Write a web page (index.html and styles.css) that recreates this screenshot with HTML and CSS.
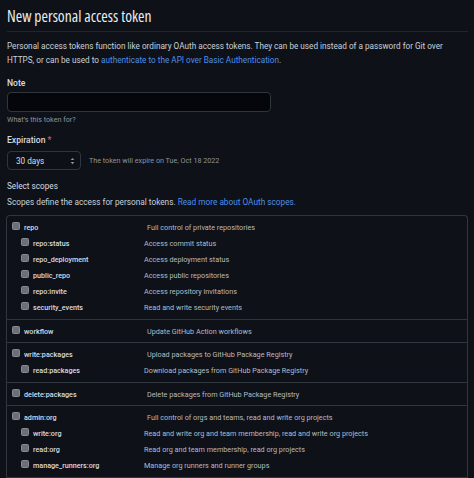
FILE: index.html
```html
<!DOCTYPE html>
<html lang="en">
<head>
<meta charset="utf-8">
<title>New personal access token</title>
<link rel="stylesheet" href="styles.css">
</head>
<body>
<main class="page">
  <h1 class="title">New personal access token</h1>
  <p class="intro">Personal access tokens function like ordinary OAuth access tokens. They can be used instead of a password for Git over HTTPS, or can be used to <a href="#" class="link">authenticate to the API over Basic Authentication</a>.</p>

  <div class="field first">
    <label class="field-label">Note</label>
    <div class="input"></div>
    <p class="hint">What’s this token for?</p>
  </div>

  <div class="field">
    <label class="field-label">Expiration <span class="req">*</span></label>
    <div class="exp-row">
      <div class="select">
        <span>30 days</span>
        <svg class="updown" viewBox="0 0 8 12" width="5" height="8"><path d="M4 1 L7 4.5 H1 Z M4 11 L7 7.5 H1 Z" fill="#8b949e"/></svg>
      </div>
      <span class="exp-note">The token will expire on Tue, Oct 18 2022</span>
    </div>
  </div>

  <h2 class="section">Select scopes</h2>
  <p class="scopes-intro">Scopes define the access for personal tokens. <a href="#" class="link">Read more about OAuth scopes.</a></p>

  <div class="scopes">
    <div class="group">
      <div class="row top"><span class="cb"></span><span class="name">repo</span><span class="desc">Full control of private repositories</span></div>
      <div class="row sub"><span class="cb"></span><span class="name">repo:status</span><span class="desc">Access commit status</span></div>
      <div class="row sub"><span class="cb"></span><span class="name">repo_deployment</span><span class="desc">Access deployment status</span></div>
      <div class="row sub"><span class="cb"></span><span class="name">public_repo</span><span class="desc">Access public repositories</span></div>
      <div class="row sub"><span class="cb"></span><span class="name">repo:invite</span><span class="desc">Access repository invitations</span></div>
      <div class="row sub"><span class="cb"></span><span class="name">security_events</span><span class="desc">Read and write security events</span></div>
    </div>
    <div class="group">
      <div class="row top"><span class="cb"></span><span class="name">workflow</span><span class="desc">Update GitHub Action workflows</span></div>
    </div>
    <div class="group">
      <div class="row top"><span class="cb"></span><span class="name">write:packages</span><span class="desc">Upload packages to GitHub Package Registry</span></div>
      <div class="row sub"><span class="cb"></span><span class="name">read:packages</span><span class="desc">Download packages from GitHub Package Registry</span></div>
    </div>
    <div class="group">
      <div class="row top"><span class="cb"></span><span class="name">delete:packages</span><span class="desc">Delete packages from GitHub Package Registry</span></div>
    </div>
    <div class="group">
      <div class="row top"><span class="cb"></span><span class="name">admin:org</span><span class="desc">Full control of orgs and teams, read and write org projects</span></div>
      <div class="row sub"><span class="cb"></span><span class="name">write:org</span><span class="desc">Read and write org and team membership, read and write org projects</span></div>
      <div class="row sub"><span class="cb"></span><span class="name">read:org</span><span class="desc">Read org and team membership, read org projects</span></div>
      <div class="row sub"><span class="cb"></span><span class="name">manage_runners:org</span><span class="desc">Manage org runners and runner groups</span></div>
    </div>
    <div class="group filler"></div>
  </div>
</main>
</body>
</html>
```

FILE: styles.css
```css
html, body {
  margin: 0;
  padding: 0;
  background: #0e1117;
  color: #c9d1d9;
  font-family: Roboto, "Noto Sans", sans-serif;
  overflow: hidden;
  height: 478px;
}

.page {
  padding: 0 6px 0 7px;
}

.title {
  margin: 0;
  padding-top: 6px;
  font-family: "Open Sans", "Noto Sans", sans-serif;
  font-stretch: 87.5%;
  font-size: 15.6px;
  line-height: 20px;
  font-weight: 400;
  color: #e6edf3;
  padding-bottom: 5px;
  border-bottom: 1px solid #21262d;
}

.intro {
  margin: 7px 0 0;
  font-size: 8.2px;
  line-height: 14px;
}

.link {
  color: #4f8fe8;
  text-decoration: none;
}

.field {
  margin-top: 7px;
}

.field.first {
  margin-top: 9px;
}

.field-label {
  display: block;
  font-size: 8.6px;
  line-height: 14px;
  font-weight: 500;
  color: #d6dde4;
}

.req {
  color: #f85149;
}

.input {
  margin-top: 2px;
  width: 262px;
  height: 18px;
  background: #04060b;
  border: 1px solid #30363d;
  border-radius: 4px;
}

.hint {
  margin: 2px 0 0;
  font-size: 7.2px;
  line-height: 12px;
  color: #8b949e;
}

.exp-row {
  margin-top: 4px;
  display: flex;
  align-items: center;
  gap: 8px;
}

.select {
  box-sizing: border-box;
  width: 74px;
  height: 19px;
  border: 1px solid #30363d;
  border-radius: 4px;
  background: #0d1117;
  display: flex;
  align-items: center;
  justify-content: space-between;
  padding: 0 5px 0 8px;
  font-size: 8.2px;
  color: #d6dde4;
}

.updown {
  display: block;
}

.exp-note {
  font-size: 7.2px;
  color: #8b949e;
}

.section {
  margin: 9px 0 0;
  font-size: 8.2px;
  line-height: 14px;
  font-weight: 400;
  color: #d6dde4;
}

.scopes-intro {
  margin: 2px 0 0;
  font-size: 8.25px;
  line-height: 14px;
}

.scopes {
  margin: 6px 0 0 -1px;
  border: 1px solid #30363d;
  border-radius: 4px 4px 0 0;
  border-bottom: none;
}

.group {
  padding: 3.5px 0 3px;
  border-bottom: 1px solid #30363d;
}

.group.filler {
  height: 20px;
  border-bottom: none;
}

.row {
  display: flex;
  align-items: center;
  height: 16px;
}

.row.top {
  padding-left: 5px;
}

.row.sub {
  padding-left: 14px;
}

.cb {
  box-sizing: border-box;
  width: 8px;
  height: 8px;
  flex: none;
  background: #6b7078;
  border: 1px solid #868b92;
  border-radius: 1.5px;
  margin-top: -3px;
}

.name {
  flex: none;
  margin-left: 4px;
  font-size: 7.2px;
  font-weight: 500;
  color: #d6dde4;
}

.row.top .name {
  width: 123px;
}

.row.sub .name {
  width: 111px;
}

.desc {
  font-size: 7.25px;
  color: #b5bcc4;
  white-space: nowrap;
}
```
